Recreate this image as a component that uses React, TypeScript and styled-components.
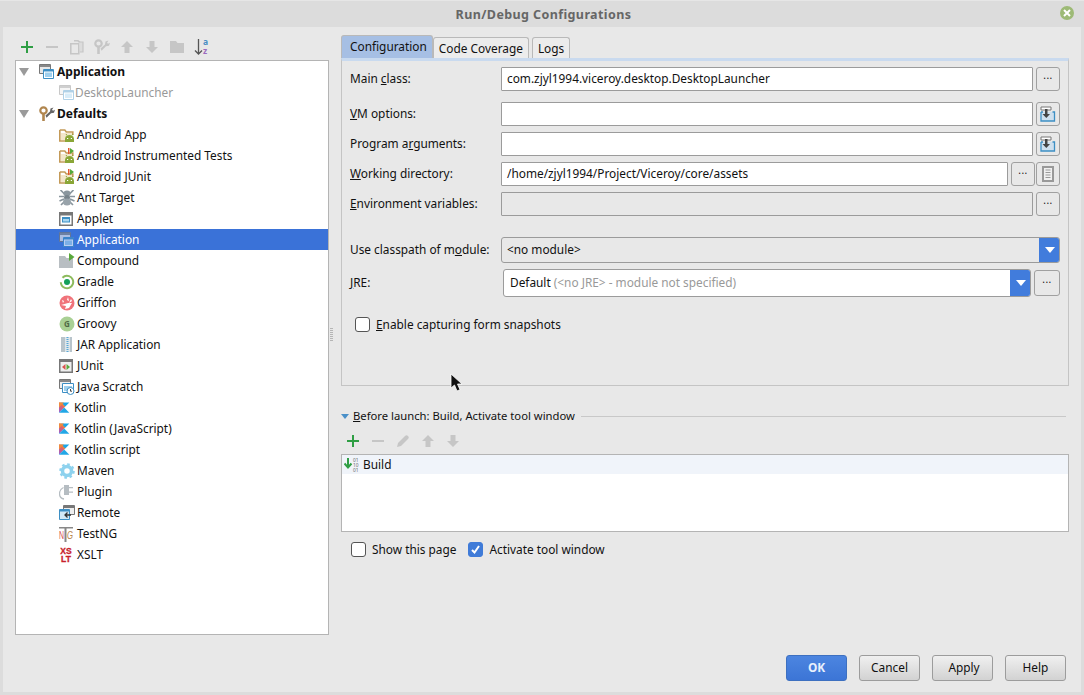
import React from "react";
import styled, { createGlobalStyle } from "styled-components";

const GlobalStyle = createGlobalStyle`
  html, body {
    margin: 0;
    padding: 0;
    background: #e8e8e8;
  }
  * {
    box-sizing: border-box;
  }
`;

const AppIcon = ({ faded }: { faded?: boolean }) => (
  <svg width="16" height="16" viewBox="0 0 16 16" opacity={faded ? 0.4 : 1}>
    <path d="M.5 .5h11v9h-11z" fill="#e8e8e8" stroke="#777" />
    <path d="M1 1h10v2H1z" fill="#888" />
    <path d="M4.5 5.5h10v9h-10z" fill="#fff" stroke="#3d8fc4" />
    <path d="M5 6h9v1.500H5z" fill="#3d8fc4" />
    <path d="M6 8.500h7v4.500H6z" fill="#9fd0ee" />
  </svg>
);

const WrenchIcon = ({ color = "#b0864f", tool = "#666" }: { color?: string; tool?: string }) => (
  <svg width="16" height="16" viewBox="0 0 16 16">
    <circle cx="4.500" cy="4.500" r="3.200" fill="none" stroke={color} strokeWidth="2.200" />
    <path d="M4.500 7v8" stroke={color} strokeWidth="2.600" />
    <path d="M6.500 9.500L11 5.500l.5-3 3-1-1.500 2.200 1 1 2-1-1 3-3 .5-4.500 4.500z" fill={tool} />
  </svg>
);

const AndroidFolderIcon = ({ test }: { test?: boolean }) => (
  <svg width="16" height="16" viewBox="0 0 16 16">
    <path d="M.8 3h5l1.500 2h6.500v3M.8 3v11h6" fill="none" stroke="#c49a58" strokeWidth="1.600" />
    <path d="M2 6h11v2H8v5H2z" fill="#f3e6cb" />
    <path d="M6 15v-3a4.500 4 0 0 1 9 0v3z" fill="#8aa637" />
    <path d="M8 8.500l-1-1.500M13 8.500l1-1.500" stroke="#8aa637" />
    <path d="M8 11h1.200v1H8zM11.800 11H13v1h-1.200z" fill="#fff" />
    {test && <path d="M10.500 0h-1.500v6h1.500z" fill="#e0572f" />}
    {test && <path d="M11 0l4 3-4 3z" fill="#55a83a" />}
  </svg>
);

const AntIcon = () => (
  <svg width="16" height="16" viewBox="0 0 16 16">
    <path d="M1.500 0l4 4M14.500 0l-4 4M0 6.500h5M16 6.500h-5M.5 11l4.500-2M15.500 11L11 9M2 15l3-3M14 15l-3-3" stroke="#8a969e" strokeWidth="1.700" />
    <ellipse cx="8" cy="3.500" rx="3.500" ry="3" fill="#8a969e" />
    <ellipse cx="8" cy="7.500" rx="3" ry="2.500" fill="#77838b" />
    <ellipse cx="8" cy="12" rx="4" ry="3.500" fill="#98a3aa" />
  </svg>
);

const AppletIcon = () => (
  <svg width="16" height="16" viewBox="0 0 16 16">
    <path d="M.75 1.750h12.500v12.500H.75z" fill="#fff" stroke="#777" strokeWidth="1.500" />
    <path d="M1 2h12v2.500H1z" fill="#777" />
    <path d="M3 6h8v5.500H3z" fill="#3d8fc4" />
    <path d="M4 8h6v2.500H4z" fill="#a9d6f0" />
  </svg>
);

const CompoundIcon = () => (
  <svg width="16" height="16" viewBox="0 0 16 16">
    <path d="M0 3h6l1.500 2H14v10H0z" fill="#b8bec2" />
    <path d="M10 0l5.500 4L10 8z" fill="#59a83b" />
  </svg>
);

const GradleIcon = () => (
  <svg width="16" height="16" viewBox="0 0 16 16">
    <circle cx="8" cy="8" r="6.200" fill="none" stroke="#8dbb5d" strokeWidth="2" strokeDasharray="26 5" transform="rotate(-70 8 8)" />
    <circle cx="8" cy="8" r="3" fill="#14a05a" />
  </svg>
);

const GriffonIcon = () => (
  <svg width="16" height="16" viewBox="0 0 16 16">
    <circle cx="8" cy="8" r="7.500" fill="#f0737a" />
    <path d="M3 5l2 1-1 2zM9 2l1 4-2-1zM12 4l1 2-3 2zM2 10l7-2 4 0-3 5-4 1 1-3z" fill="#fff" />
  </svg>
);

const GroovyIcon = () => (
  <svg width="16" height="16" viewBox="0 0 16 16">
    <circle cx="8" cy="8" r="7.500" fill="#a9d094" />
    <text x="8" y="11" textAnchor="middle" fontFamily="Noto Sans" fontSize="8" fontWeight="700" fill="#4f6a45">G</text>
  </svg>
);

const JarIcon = () => (
  <svg width="16" height="16" viewBox="0 0 16 16">
    <path d="M2 0h11v15H2z" fill="#b8c4cb" />
    <path d="M6 0h5v15H6z" fill="#dde6ea" />
    <path d="M7.500 0h2v1h-2zM7.500 2h2v1h-2zM7.500 4h2v1h-2zM7.500 6h2v1h-2zM7.500 8h2v1h-2zM7.500 10h2v1h-2zM7.500 12h2v1h-2zM7.500 14h2v1h-2z" fill="#5aa7d6" />
  </svg>
);

const JunitIcon = () => (
  <svg width="16" height="16" viewBox="0 0 16 16">
    <path d="M.75 1.750h12.500v12.500H.75z" fill="#eee" stroke="#777" strokeWidth="1.500" />
    <path d="M1 2h12v2H1z" fill="#777" />
    <path d="M6.500 6v6L3 9z" fill="#d9534f" />
    <path d="M7.500 6v6l3.500-3z" fill="#59a83b" />
  </svg>
);

const ScratchIcon = () => (
  <svg width="16" height="16" viewBox="0 0 16 16">
    <path d="M.5 .5h11v9h-11z" fill="#eee" stroke="#777" />
    <path d="M1 1h10v2H1z" fill="#888" />
    <path d="M3.500 4.500h11v9h-11z" fill="#fff" stroke="#3d8fc4" />
    <path d="M5 7h8v5H5z" fill="#9fd0ee" />
    <circle cx="11.500" cy="12" r="3.500" fill="#fff" stroke="#3d8fc4" />
    <path d="M11.500 10v2.200h1.500" fill="none" stroke="#444" />
  </svg>
);

const KotlinIcon = ({ id }: { id: string }) => (
  <svg width="16" height="16" viewBox="0 0 16 16">
    <defs>
      <linearGradient id={id} x1="0" y1="1" x2="1" y2="0">
        <stop offset="0" stopColor="#8f62d8" />
        <stop offset="0.45" stopColor="#e0606a" />
        <stop offset="0.6" stopColor="#ef8a3a" />
        <stop offset="0.62" stopColor="#1ba6e8" />
        <stop offset="1" stopColor="#1ba6e8" />
      </linearGradient>
    </defs>
    <path d="M0 2h11L0 13z" fill={`url(#${id})`} />
    <path d="M0 2h5.500L0 7.500z" fill="#f08a3c" />
    <path d="M0 13L5.500 7.500 11 13z" fill="#22a7e6" />
  </svg>
);

const MavenIcon = () => (
  <svg width="16" height="16" viewBox="0 0 16 16">
    <circle cx="8" cy="8" r="4.500" fill="none" stroke="#8ed2ee" strokeWidth="3.500" />
    <circle cx="8" cy="8" r="6.700" fill="none" stroke="#8ed2ee" strokeWidth="2.200" strokeDasharray="2.600 2.660" />
  </svg>
);

const PluginIcon = () => (
  <svg width="16" height="16" viewBox="0 0 16 16">
    <path d="M5 1h5v10H5z" fill="#b6bdc2" />
    <path d="M10 3h4v1.300h-4zM10 7.500h4v1.300h-4z" fill="#b6bdc2" />
    <path d="M4.500 3.500C1.500 5 .5 7 .5 9.500c0 2.500 1.500 5 4.500 5.500" fill="none" stroke="#b6bdc2" strokeWidth="1.300" />
  </svg>
);

const RemoteIcon = () => (
  <svg width="16" height="16" viewBox="0 0 16 16">
    <path d="M4.500 .5h11v9h-11z" fill="#eee" stroke="#777" />
    <path d="M5 1h10v2H5z" fill="#777" />
    <path d="M.5 4.500h10v10H.5z" fill="#d3e8f5" stroke="#3d8fc4" />
    <path d="M1 5h9v1.500H1z" fill="#3d8fc4" />
    <path d="M12 10H6M8.500 7.500L6 10l2.500 2.500" fill="none" stroke="#333" strokeWidth="1.300" />
  </svg>
);

const TestNgIcon = () => (
  <svg width="16" height="16" viewBox="0 0 16 16">
    <path d="M0 1h14v1.500H0zM5.500 2h2v14h-2z" fill="#888" />
    <text x="0" y="13" fontFamily="Liberation Sans" fontSize="11.500" fill="#d9534f" textLength="5" lengthAdjust="spacingAndGlyphs">N</text>
    <text x="8" y="13" fontFamily="Liberation Sans" fontSize="11.500" fontStyle="italic" fill="#b8864f" textLength="6" lengthAdjust="spacingAndGlyphs">G</text>
  </svg>
);

const XsltIcon = () => (
  <svg width="16" height="16" viewBox="0 0 16 16">
    <text x="7" y="7" textAnchor="middle" fontFamily="Liberation Sans" fontSize="8.500" fontWeight="700" fill="#c8202a" stroke="#c8202a" strokeWidth="0.300">XS</text>
    <text x="7" y="15" textAnchor="middle" fontFamily="Liberation Sans" fontSize="8.500" fontWeight="700" fill="#c8202a" stroke="#c8202a" strokeWidth="0.300">LT</text>
  </svg>
);

const PlusIcon = () => (
  <svg width="14" height="14" viewBox="0 0 14 14">
    <path d="M7 1v12M1 7h12" stroke="#2f9e44" strokeWidth="2" />
  </svg>
);

const MinusIcon = () => (
  <svg width="14" height="14" viewBox="0 0 14 14">
    <path d="M1 7h12" stroke="#c6c6c6" strokeWidth="2" />
  </svg>
);

const CopyIcon = () => (
  <svg width="16" height="16" viewBox="0 0 16 16">
    <path d="M1.800 4.800h8v10h-8zM5 1.800h4l3.500 3v7" fill="none" stroke="#c6c6c6" strokeWidth="1.600" />
    <path d="M10 3h4v10h-3" fill="#dcdcdc" stroke="#c6c6c6" strokeWidth="1.200" />
  </svg>
);

const ArrowUpIcon = () => (
  <svg width="14" height="14" viewBox="0 0 14 14">
    <path d="M7 1l6 6H9.500v6h-5V7H1z" fill="#c6c6c6" />
  </svg>
);

const ArrowDownIcon = () => (
  <svg width="14" height="14" viewBox="0 0 14 14">
    <path d="M7 13l6-6H9.500V1h-5v6H1z" fill="#c6c6c6" />
  </svg>
);

const FolderIcon = () => (
  <svg width="16" height="16" viewBox="0 0 16 16">
    <path d="M1 2h6l1.500 2H15v10H1z" fill="#c6c6c6" />
  </svg>
);

const PencilIcon = () => (
  <svg width="14" height="14" viewBox="0 0 14 14">
    <path d="M1 13l1-4L9 2c1-1 2-1 3 0s1 2 0 3l-7 7z" fill="#c6c6c6" />
  </svg>
);

const SortIcon = () => (
  <svg width="18" height="20" viewBox="0 0 18 20">
    <path d="M5.500 2v15M2 13.500l3.500 3.500 3.500-3.500" fill="none" stroke="#555" strokeWidth="1.300" />
    <text x="10" y="8" fontFamily="Noto Sans" fontSize="8.500" fontWeight="700" fill="#4a8fc4">a</text>
    <text x="10" y="17" fontFamily="Noto Sans" fontSize="8.500" fontWeight="700" fill="#9b6bbf">z</text>
  </svg>
);

const ImportIcon = () => (
  <svg width="16" height="16" viewBox="0 0 16 16">
    <path d="M1 6v9h13.500V6h-2M1 6h2" fill="#cfe0ee" stroke="#3d8fc4" strokeWidth="1.300" />
    <path d="M1 1h10v3H1z" fill="#fff" stroke="#777" />
    <path d="M5 3h2.500v5H10l-3.700 4-3.800-4H5z" fill="#444" />
  </svg>
);

const DocIcon = () => (
  <svg width="12" height="16" viewBox="0 0 12 16">
    <path d="M1 1h10v14H1z" fill="#f0f0f0" stroke="#999" strokeWidth="2" />
    <path d="M3.500 4h5M3.500 6.500h5M3.500 9h5M3.500 11.500h5" stroke="#999" />
  </svg>
);

const BuildIcon = () => (
  <svg width="19" height="16" viewBox="0 0 19 16">
    <path d="M4 1v9M.5 6.500L4 10.500l3.500-4" fill="none" stroke="#2f9e44" strokeWidth="2" />
    <text x="9" y="5" fontFamily="Noto Sans" fontSize="4.800" fill="#666">01</text>
    <text x="9" y="10" fontFamily="Noto Sans" fontSize="4.800" fill="#666">10</text>
    <text x="9" y="15" fontFamily="Noto Sans" fontSize="4.800" fill="#666">01</text>
  </svg>
);

const Window = styled.div`
  position: relative;
  width: 1084px;
  height: 695px;
  display: flex;
  flex-direction: column;
  background: #e8e8e8;
  font-family: "Noto Sans", sans-serif;
  font-size: 11.85px;
  color: #111;
  overflow: hidden;
`;

const TitleBar = styled.div`
  height: 27px;
  flex: none;
  display: flex;
  align-items: center;
  justify-content: center;
  padding-left: 3px;
  background: #dcdcdc;
  border-top: 1px solid #e6e6e6;
  font-weight: 700;
  font-size: 12.5px;
  letter-spacing: 0.4px;
  color: #666;
  position: relative;
`;

const CloseButton = styled.div`
  position: absolute;
  left: 1060px;
  top: 5px;
  width: 14px;
  height: 14px;
  border-radius: 50%;
  background: #9dba76;
  display: flex;
  align-items: center;
  justify-content: center;
`;

const Content = styled.div`
  flex: 1;
  border: 3px solid #dcdcdc;
  border-top: none;
`;

const Main = styled.div`
  display: flex;
  padding: 8px 0 0 12px;
`;

const LeftPane = styled.div`
  width: 314px;
  flex: none;
`;

const Toolbar = styled.div`
  display: flex;
  align-items: center;
  height: 24px;
  margin-left: -1px;
`;

const ToolButton = styled.div`
  width: 25px;
  height: 24px;
  display: flex;
  align-items: center;
  justify-content: center;
`;

const Tree = styled.div`
  height: 575px;
  margin-top: 1px;
  background: #fff;
  border: 1px solid #b4b4b4;
`;

const TreeRow = styled.div<{ $indent: number; $selected?: boolean; $muted?: boolean; $bold?: boolean }>`
  height: 21px;
  display: flex;
  align-items: center;
  padding-left: ${(p) => p.$indent}px;
  background: ${(p) => (p.$selected ? "#3a72d8" : "transparent")};
  color: ${(p) => (p.$selected ? "#fff" : p.$muted ? "#999" : "#111")};
  font-weight: ${(p) => (p.$bold ? 700 : 400)};
  font-size: ${(p) => (p.$bold ? "12px" : "inherit")};
`;

const RowLabel = styled.span`
  padding-bottom: 2px;
`;

const Caret = styled.div`
  width: 0;
  height: 0;
  margin-right: 10px;
  border-left: 5px solid transparent;
  border-right: 5px solid transparent;
  border-top: 8px solid #9a9a9a;
`;

const TreeIcon = styled.span<{ $faded?: boolean; $width: number }>`
  width: ${(p) => p.$width}px;
  height: 16px;
  flex: none;
  display: flex;
  align-self: flex-start;
  margin-top: 3px;
  opacity: ${(p) => (p.$faded ? 0.65 : 1)};
`;

const Grip = styled.div`
  width: 12px;
  flex: none;
  display: flex;
  align-items: center;
  padding-left: 1px;
  &::before {
    content: "";
    width: 3px;
    height: 14px;
    background: repeating-linear-gradient(#b5b5b5 0 1px, transparent 1px 2px);
  }
`;

const RightPane = styled.div`
  width: 728px;
  flex: none;
`;

const Tabs = styled.div`
  display: flex;
  align-items: flex-end;
  height: 23px;
`;

const Tab = styled.div<{ $active?: boolean }>`
  height: ${(p) => (p.$active ? 23 : 21)}px;
  padding: ${(p) => (p.$active ? "0 5px 2px 8px" : "0 5px")};
  margin-right: ${(p) => (p.$active ? 0 : 3)}px;
  display: flex;
  align-items: center;
  background: ${(p) => (p.$active ? "#a6bfe4" : "#ececec")};
  border: 1px solid #b9b9b9;
  border-bottom: none;
  border-radius: 3px 3px 0 0;
`;

const ConfigPanel = styled.div`
  height: 328px;
  padding: 6px 8px 0 8px;
  border: 1px solid #c4c4c4;
  border-top: 3px solid #c9daef;
  background: #e8e8e8;
`;

const FormRow = styled.div<{ $gap?: number; $height?: number }>`
  display: flex;
  align-items: center;
  height: ${(p) => p.$height ?? 24}px;
  margin-top: ${(p) => p.$gap ?? 6}px;
  &:first-child {
    margin-top: 0;
  }
`;

const Label = styled.div`
  width: 151px;
  flex: none;
  padding-bottom: 2px;
`;

const Input = styled.div<{ $disabled?: boolean }>`
  flex: 1;
  height: 24px;
  padding: 0 5px 2px;
  display: flex;
  align-items: center;
  background: ${(p) => (p.$disabled ? "#e8e8e8" : "#fff")};
  border: 1px solid #9b9b9b;
  border-radius: 1px;
`;

const SmallButton = styled.div<{ $width?: number; $height?: number; $gap?: number; $dots?: boolean }>`
  width: ${(p) => p.$width ?? 24}px;
  height: ${(p) => p.$height ?? 24}px;
  margin-left: ${(p) => p.$gap ?? 3}px;
  flex: none;
  display: flex;
  align-items: center;
  justify-content: center;
  border: 1px solid #a0a0a0;
  border-radius: 3px;
  background: #e8e8e8;
  font-size: ${(p) => (p.$dots ? "10px" : "inherit")};
  letter-spacing: ${(p) => (p.$dots ? "0.5px" : "0")};
  padding-bottom: ${(p) => (p.$dots ? 8 : 0)}px;
`;

const Combo = styled.div<{ $white?: boolean; $indent?: number }>`
  flex: 1;
  align-self: stretch;
  margin-left: ${(p) => p.$indent ?? 0}px;
  display: flex;
  align-items: center;
  justify-content: space-between;
  padding-left: ${(p) => (p.$white ? 6 : 5)}px;
  background: ${(p) => (p.$white ? "#fff" : "#e8e8e8")};
  border: 1px solid #9b9b9b;
  border-radius: 3px;
  overflow: hidden;
`;

const ComboArrow = styled.div`
  width: 21px;
  margin: -1px;
  align-self: stretch;
  flex: none;
  display: flex;
  align-items: center;
  justify-content: center;
  background: #417cdc;
  &::before {
    content: "";
    border-left: 5px solid transparent;
    border-right: 5px solid transparent;
    border-top: 6px solid #fff;
  }
`;

const Hint = styled.span`
  color: #999;
`;

const CheckRow = styled.div<{ $left?: number; $top?: number }>`
  display: flex;
  align-items: center;
  margin-top: ${(p) => p.$top ?? 0}px;
  margin-left: ${(p) => p.$left ?? 0}px;
`;

const CheckBox = styled.span<{ $checked?: boolean }>`
  width: 15px;
  height: 15px;
  flex: none;
  display: flex;
  align-items: center;
  justify-content: center;
  margin-right: 6px;
  border: 1px solid ${(p) => (p.$checked ? "#3f7bd8" : "#555")};
  border-radius: 3px;
  background: ${(p) => (p.$checked ? "#3f7bd8" : "#fff")};
`;

const SectionTitle = styled.div`
  display: flex;
  align-items: center;
  height: 16px;
  margin-top: 22px;
  margin-bottom: 5px;
  font-size: 11.25px;
  &::after {
    content: "";
    flex: 1;
    height: 1px;
    margin: 0 3px 0 6px;
    background: #c8c8c8;
  }
`;

const Disclosure = styled.div`
  width: 0;
  height: 0;
  margin-right: 4px;
  border-left: 4px solid transparent;
  border-right: 4px solid transparent;
  border-top: 5px solid #4a90c8;
`;

const BuildList = styled.div`
  height: 78px;
  margin-top: 1px;
  background: #fff;
  border: 1px solid #b4b4b4;
`;

const BuildRow = styled.div`
  height: 19px;
  display: flex;
  align-items: center;
  padding-left: 2px;
  background: #f0f4fa;
`;

const Options = styled.div`
  display: flex;
  align-items: center;
  gap: 12px;
  height: 18px;
  margin-top: 8px;
  padding-left: 10px;
`;

const Footer = styled.div`
  display: flex;
  justify-content: flex-end;
  gap: 12px;
  margin-top: 20px;
  padding-right: 15px;
`;

const DialogButton = styled.div<{ $primary?: boolean; $nudge?: number }>`
  width: 61px;
  height: 26px;
  display: flex;
  align-items: center;
  justify-content: center;
  padding-bottom: 2px;
  padding-left: ${(p) => p.$nudge ?? 0}px;
  border: 1px solid ${(p) => (p.$primary ? "#3d70c0" : "#9c9c9c")};
  border-radius: 3px;
  background: ${(p) => (p.$primary ? "linear-gradient(#4c85e0, #3c75d6)" : "linear-gradient(#f0f0f0, #d2d2d2)")};
  color: ${(p) => (p.$primary ? "#e8f0fc" : "#111")};
  font-weight: ${(p) => (p.$primary ? 700 : 400)};
`;

const Cursor = styled.svg`
  position: absolute;
  left: 450px;
  top: 373px;
`;

type TreeItem = { label: string; icon: React.ReactNode; shift?: number };

const items: TreeItem[] = [
  { label: "Android App", icon: <AndroidFolderIcon /> },
  { label: "Android Instrumented Tests", icon: <AndroidFolderIcon test /> },
  { label: "Android JUnit", icon: <AndroidFolderIcon test /> },
  { label: "Ant Target", icon: <AntIcon /> },
  { label: "Applet", icon: <AppletIcon /> },
  { label: "Application", icon: <AppIcon /> },
  { label: "Compound", icon: <CompoundIcon /> },
  { label: "Gradle", icon: <GradleIcon /> },
  { label: "Griffon", icon: <GriffonIcon /> },
  { label: "Groovy", icon: <GroovyIcon /> },
  { label: "JAR Application", icon: <JarIcon /> },
  { label: "JUnit", icon: <JunitIcon /> },
  { label: "Java Scratch", icon: <ScratchIcon /> },
  { label: "Kotlin", icon: <KotlinIcon id="kotlin1" />, shift: -3 },
  { label: "Kotlin (JavaScript)", icon: <KotlinIcon id="kotlin2" />, shift: -3 },
  { label: "Kotlin script", icon: <KotlinIcon id="kotlin3" />, shift: -3 },
  { label: "Maven", icon: <MavenIcon /> },
  { label: "Plugin", icon: <PluginIcon /> },
  { label: "Remote", icon: <RemoteIcon /> },
  { label: "TestNG", icon: <TestNgIcon /> },
  { label: "XSLT", icon: <XsltIcon /> },
];

const Check = () => (
  <svg width="11" height="11" viewBox="0 0 11 11">
    <path d="M2 6l2.500 2.500L9 2" fill="none" stroke="#fff" strokeWidth="2" />
  </svg>
);

export default function App() {
  return (
    <Window>
      <GlobalStyle />
      <TitleBar>
        Run/Debug Configurations
        <CloseButton>
          <svg width="8" height="8" viewBox="0 0 8 8">
            <path d="M1 1l6 6M7 1l-6 6" stroke="#fff" strokeWidth="2" />
          </svg>
        </CloseButton>
      </TitleBar>
      <Content>
        <Main>
          <LeftPane>
            <Toolbar>
              <ToolButton><PlusIcon /></ToolButton>
              <ToolButton><MinusIcon /></ToolButton>
              <ToolButton><CopyIcon /></ToolButton>
              <ToolButton><WrenchIcon color="#c6c6c6" tool="#c6c6c6" /></ToolButton>
              <ToolButton><ArrowUpIcon /></ToolButton>
              <ToolButton><ArrowDownIcon /></ToolButton>
              <ToolButton><FolderIcon /></ToolButton>
              <ToolButton><SortIcon /></ToolButton>
            </Toolbar>
            <Tree>
              <TreeRow $indent={3} $bold>
                <Caret />
                <TreeIcon $width={18}><AppIcon /></TreeIcon>
                Application
              </TreeRow>
              <TreeRow $indent={43} $muted>
                <TreeIcon $width={16}><AppIcon faded /></TreeIcon>
                <RowLabel>DesktopLauncher</RowLabel>
              </TreeRow>
              <TreeRow $indent={3} $bold>
                <Caret />
                <TreeIcon $width={18}><WrenchIcon /></TreeIcon>
                Defaults
              </TreeRow>
              {items.map((item) => (
                <TreeRow key={item.label} $indent={43} $selected={item.label === "Application"}>
                  <TreeIcon $width={18 + (item.shift ?? 0)} $faded={item.label === "Application"}>
                    {item.icon}
                  </TreeIcon>
                  <RowLabel>{item.label}</RowLabel>
                </TreeRow>
              ))}
            </Tree>
          </LeftPane>
          <Grip />
          <RightPane>
            <Tabs>
              <Tab $active>Configuration</Tab>
              <Tab>Code Coverage</Tab>
              <Tab>Logs</Tab>
            </Tabs>
            <ConfigPanel>
              <FormRow>
                <Label>Main <u>c</u>lass:</Label>
                <Input>com.zjyl1994.viceroy.desktop.DesktopLauncher</Input>
                <SmallButton $dots>...</SmallButton>
              </FormRow>
              <FormRow $gap={11}>
                <Label><u>V</u>M options:</Label>
                <Input />
                <SmallButton><ImportIcon /></SmallButton>
              </FormRow>
              <FormRow>
                <Label>Program a<u>r</u>guments:</Label>
                <Input />
                <SmallButton><ImportIcon /></SmallButton>
              </FormRow>
              <FormRow>
                <Label><u>W</u>orking directory:</Label>
                <Input>/home/zjyl1994/Project/Viceroy/core/assets</Input>
                <SmallButton $dots>...</SmallButton>
                <SmallButton $gap={1}><DocIcon /></SmallButton>
              </FormRow>
              <FormRow>
                <Label><u>E</u>nvironment variables:</Label>
                <Input $disabled />
                <SmallButton $dots>...</SmallButton>
              </FormRow>
              <FormRow $gap={21} $height={26}>
                <Label>Use classpath of m<u>o</u>dule:</Label>
                <Combo>
                  <RowLabel>&lt;no module&gt;</RowLabel>
                  <ComboArrow />
                </Combo>
              </FormRow>
              <FormRow $height={28}>
                <Label><u>J</u>RE:</Label>
                <Combo $white $indent={2}>
                  <RowLabel>Default <Hint>(&lt;no JRE&gt; - module not specified)</Hint></RowLabel>
                  <ComboArrow />
                </Combo>
                <SmallButton $dots $width={26} $height={26}>...</SmallButton>
              </FormRow>
              <CheckRow $top={19} $left={5}>
                <CheckBox />
                <span><u>E</u>nable capturing form snapshots</span>
              </CheckRow>
            </ConfigPanel>
            <SectionTitle>
              <Disclosure />
              <RowLabel><u>B</u>efore launch: Build, Activate tool window</RowLabel>
            </SectionTitle>
            <Toolbar>
              <ToolButton><PlusIcon /></ToolButton>
              <ToolButton><MinusIcon /></ToolButton>
              <ToolButton><PencilIcon /></ToolButton>
              <ToolButton><ArrowUpIcon /></ToolButton>
              <ToolButton><ArrowDownIcon /></ToolButton>
            </Toolbar>
            <BuildList>
              <BuildRow>
                <BuildIcon />
                <RowLabel>Build</RowLabel>
              </BuildRow>
            </BuildList>
            <Options>
              <CheckRow>
                <CheckBox />
                Show this page
              </CheckRow>
              <CheckRow>
                <CheckBox $checked><Check /></CheckBox>
                Activate tool window
              </CheckRow>
            </Options>
          </RightPane>
        </Main>
        <Footer>
          <DialogButton $primary>OK</DialogButton>
          <DialogButton>Cancel</DialogButton>
          <DialogButton $nudge={3}>Apply</DialogButton>
          <DialogButton>Help</DialogButton>
        </Footer>
      </Content>
      <Cursor width="14" height="20" viewBox="0 0 14 20">
        <path d="M1 1v14l3.500-3 2.500 6 3-1.300-2.500-5.700H12z" fill="#111" stroke="#fff" strokeWidth="0.800" />
      </Cursor>
    </Window>
  );
}
